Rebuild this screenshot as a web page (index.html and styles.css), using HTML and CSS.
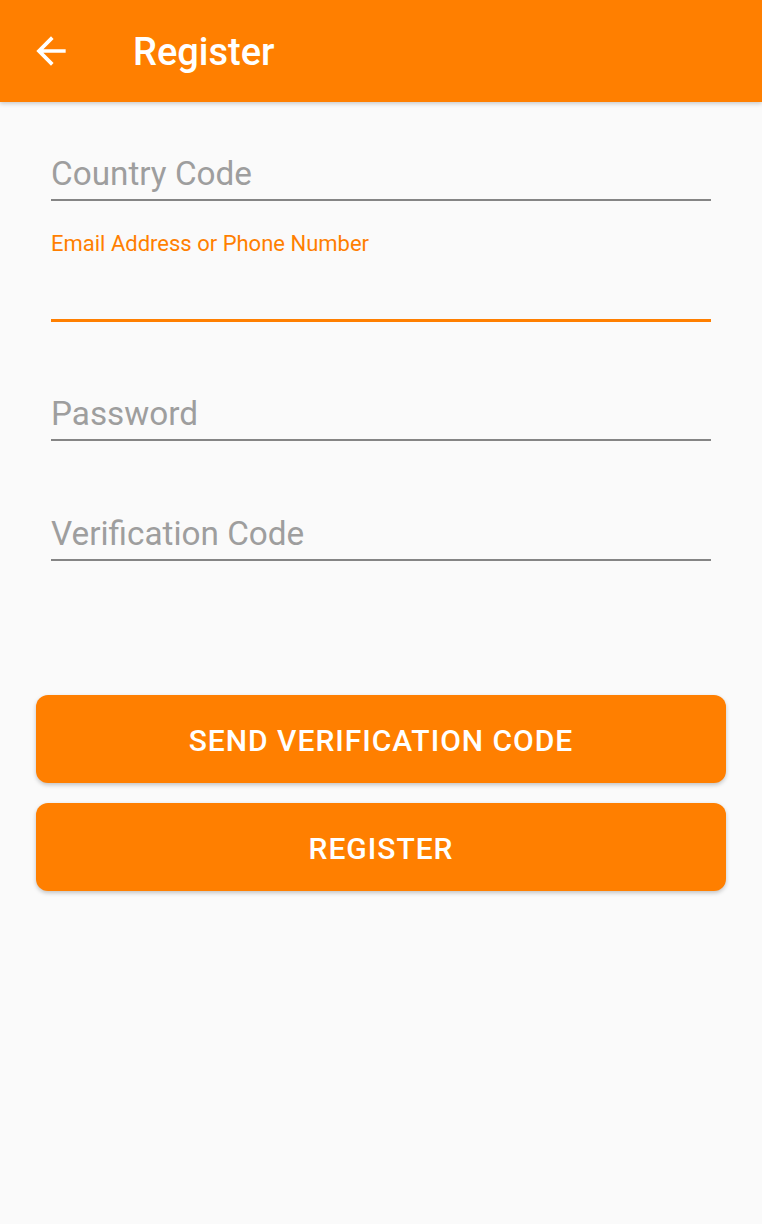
FILE: index.html
```html
<!DOCTYPE html>
<html lang="en">
<head>
<meta charset="utf-8">
<title>Register</title>
<link rel="stylesheet" href="styles.css">
</head>
<body>
<header class="toolbar">
  <button class="back" aria-label="Back">
    <svg viewBox="0 0 24 24" width="44" height="44"><path fill="#fff" d="M20 11H7.83l5.59-5.59L12 4l-8 8 8 8 1.41-1.41L7.83 13H20v-2z"/></svg>
  </button>
  <h1 class="title">Register</h1>
</header>
<main class="content">
  <form class="form">
    <div class="field">
      <div class="label"></div>
      <div class="input">Country Code</div>
    </div>
    <div class="field focused">
      <div class="label">Email Address or Phone Number</div>
      <div class="input"></div>
    </div>
    <div class="field">
      <div class="label"></div>
      <div class="input">Password</div>
    </div>
    <div class="field">
      <div class="label"></div>
      <div class="input">Verification Code</div>
    </div>
  </form>
  <div class="actions">
    <button class="btn" type="button">SEND VERIFICATION CODE</button>
    <button class="btn" type="button">REGISTER</button>
  </div>
</main>
</body>
</html>
```
FILE: styles.css
```css
* { box-sizing: border-box; }
html, body {
  margin: 0;
  padding: 0;
  background: #fafafa;
  font-family: Roboto, "Liberation Sans", sans-serif;
}
body { min-height: 1224px; }

.toolbar {
  height: 102px;
  background: #ff7f00;
  display: flex;
  align-items: center;
  box-shadow: 0 2px 4px rgba(0, 0, 0, 0.18);
  position: relative;
  z-index: 1;
}
.back {
  width: 44px;
  height: 44px;
  margin-left: 29px;
  padding: 0;
  border: 0;
  background: none;
  display: flex;
}
.title {
  margin: 2px 0 0 60px;
  color: #fff;
  font-size: 38px;
  font-weight: 500;
  line-height: 44px;
}

.form {
  padding: 9px 51px 0;
  display: flex;
  flex-direction: column;
  gap: 30px;
}
.field { display: flex; flex-direction: column; }
.label {
  height: 26px;
  margin-bottom: 16px;
  font-size: 22px;
  line-height: 26px;
  color: #ff7f00;
}
.input {
  height: 48px;
  font-size: 33.3px;
  line-height: 40px;
  padding-top: 1px;
  padding-bottom: 5px;
  color: #9e9e9e;
  border-bottom: 2px solid #858585;
}
.field.focused .input {
  border-bottom: 3px solid #ff7f00;
  height: 49px;
  margin-bottom: -1px;
}

.actions {
  margin-top: 134px;
  padding: 0 36px;
  display: flex;
  flex-direction: column;
  gap: 20px;
}
.btn {
  height: 88px;
  padding: 2px 0 0;
  border: 0;
  border-radius: 12px;
  background: #ff7f00;
  color: #fff;
  font-family: Roboto, "Liberation Sans", sans-serif;
  font-size: 30px;
  font-weight: 500;
  letter-spacing: 0.033em;
  box-shadow: 0 2px 4px rgba(0, 0, 0, 0.22);
}
```
